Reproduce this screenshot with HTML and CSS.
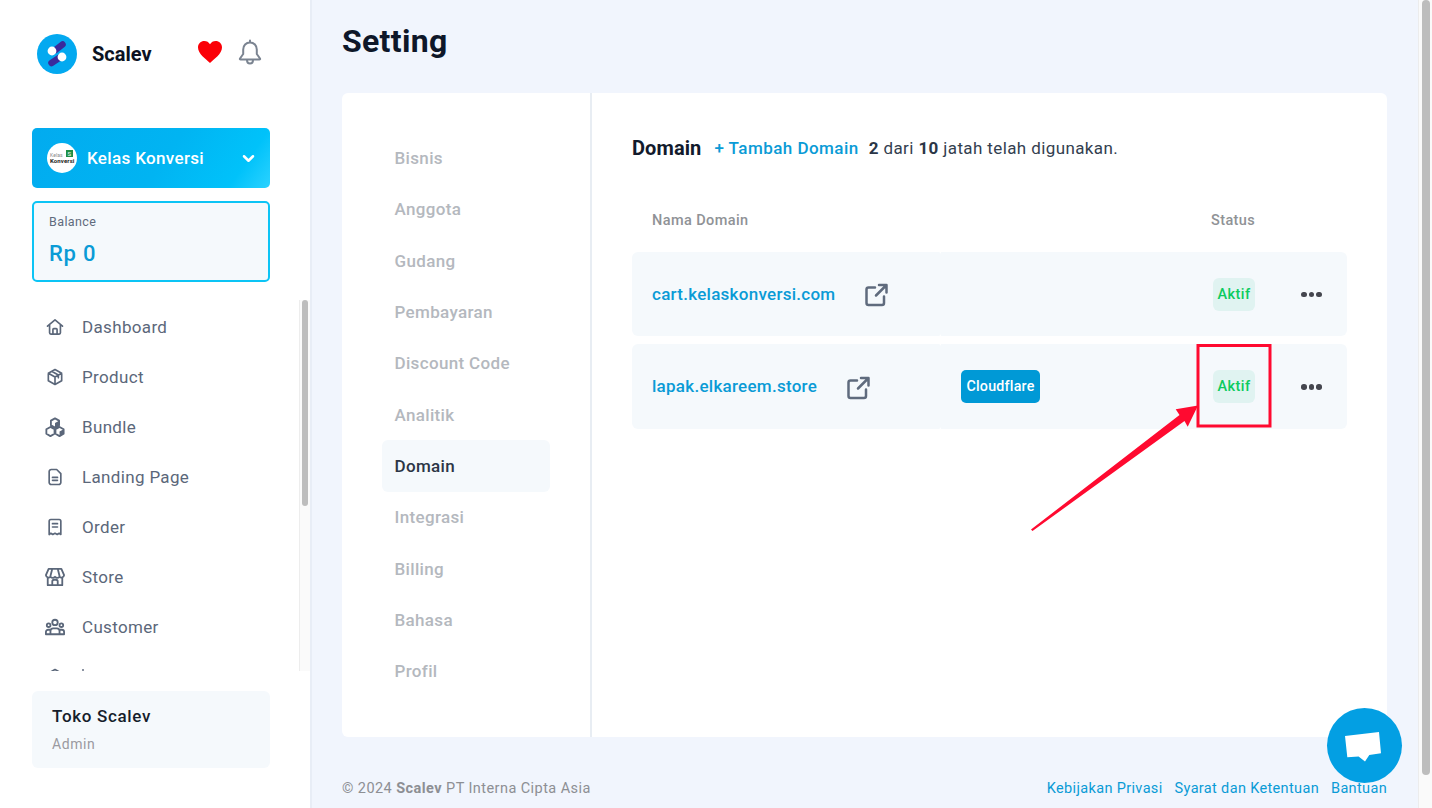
FILE: index.html
```html
<!DOCTYPE html>
<html lang="id">
<head>
<meta charset="utf-8">
<title>Setting - Scalev</title>
<link rel="stylesheet" href="styles.css">
</head>
<body>
<div class="app">
  <aside class="sidebar">
    <div class="brand">
      <svg class="logo" viewBox="0 0 40 40"><circle cx="20" cy="20" r="20" fill="#03a9f0"/><path d="M25.500 10.500 L18.500 16M14.500 29 L22 24" stroke="#3a2a9c" stroke-width="6.500" stroke-linecap="round"/><circle cx="15" cy="17" r="4.400" fill="#fff"/><circle cx="25" cy="23" r="4.400" fill="#fff"/></svg>
      <span class="brand-name">Scalev</span>
      <svg class="heart" viewBox="0 0 24 22"><path d="M12 22 C8 18 0 13 0 6.500 C0 2.500 3 0 6.300 0 C8.800 0 10.800 1.200 12 3.300 C13.200 1.200 15.200 0 17.700 0 C21 0 24 2.500 24 6.500 C24 13 16 18 12 22Z" fill="#fb0007"/></svg>
      <svg class="bell" viewBox="0 0 24 26" fill="none" stroke="#7b8491" stroke-width="2" stroke-linecap="round" stroke-linejoin="round"><path d="M12 1.500v2M12 3.500c-4 0-6.800 3-6.800 7v4.500L2 19.500c-.3.500 0 1 .6 1h18.800c.6 0 .9-.5.6-1L18.800 15v-4.500c0-4-2.800-7-6.800-7Z"/><path d="M9 21c0 2 1.300 3.500 3 3.500s3-1.500 3-3.500"/></svg>
    </div>
    <button class="biz">
      <span class="biz-logo"><span class="biz-mark">S</span><span class="biz-l1">Kelas</span><span class="biz-l2">Konversi</span></span>
      <span class="biz-name">Kelas Konversi</span>
      <svg class="chev" viewBox="0 0 14 10" fill="none" stroke="#fff" stroke-width="2.800" stroke-linecap="round" stroke-linejoin="round"><path d="M2 2.500 7 7.500 12 2.500"/></svg>
    </button>
    <div class="balance">
      <div class="balance-label">Balance</div>
      <div class="balance-value">Rp 0</div>
    </div>
    <div class="nav-wrap">
      <nav class="nav">
        <a class="nav-item"><svg class="ni" viewBox="0 0 24 24"><path d="M3 11 12 3.500 21 11M5.500 9.500V19a1.500 1.500 0 0 0 1.500 1.500h10a1.500 1.500 0 0 0 1.500-1.500V9.500M9.500 20.500V15a1 1 0 0 1 1-1h3a1 1 0 0 1 1 1v5.500"/></svg>Dashboard</a>
        <a class="nav-item"><svg class="ni" viewBox="0 0 24 24"><path d="M12 3 20 7.500v9L12 21 4 16.500v-9ZM4 7.500 12 12l8-4.500M12 12v9M8 5.200l8 4.500V13"/></svg>Product</a>
        <a class="nav-item"><svg class="ni" viewBox="1 1 22 22"><path d="M12 2.500 16.500 5v5L12 12.500 7.500 10V5ZM7 12 11.500 14.500v5L7 22 2.500 19.500v-5ZM17 12 21.500 14.500v5L17 22 12.500 19.500v-5Z"/><path class="fill" d="M17 17 21.500 14.500v5L17 22ZM12 7.500 16.500 5v5L12 12.500Z"/></svg>Bundle</a>
        <a class="nav-item"><svg class="ni" viewBox="0 0 24 24"><path d="M14 3H7.500A2.500 2.500 0 0 0 5 5.500v13A2.500 2.500 0 0 0 7.500 21h9a2.500 2.500 0 0 0 2.500-2.500V8ZM9 12.500h6M9 16h6"/></svg>Landing Page</a>
        <a class="nav-item"><svg class="ni" viewBox="0 0 24 24"><path d="M5 21V5a2 2 0 0 1 2-2h10a2 2 0 0 1 2 2v16l-2-1.500-2.300 1.500-2.700-1.500L9.300 21 7 19.500ZM9 8h6M9 12h6"/></svg>Order</a>
        <a class="nav-item"><svg class="ni" viewBox="1 1 22 22"><path d="M5 3h14l3 7a3 3 0 0 1-5 1.800 3.600 3.600 0 0 1-5 0 3.600 3.600 0 0 1-5 0A3 3 0 0 1 2 10ZM4 12.500V21h16v-8.500M9 21v-4a2 2 0 0 1 2-2h2a2 2 0 0 1 2 2v4M9 3 7 11M15 3l2 8"/></svg>Store</a>
        <a class="nav-item"><svg class="ni" viewBox="1 1 22 22"><circle cx="12" cy="7" r="3"/><circle cx="5" cy="10" r="2"/><circle cx="19" cy="10" r="2"/><path d="M7 20v-3.500a3 3 0 0 1 3-3h4a3 3 0 0 1 3 3V20ZM2 20v-2.500A2.500 2.500 0 0 1 4.500 15H7M22 20v-2.500a2.500 2.500 0 0 0-2.500-2.500H17M2 20h20"/></svg>Customer</a>
        <div class="nav-peek"><svg class="ni" viewBox="0 0 24 24"><path d="M12 3 20 7.500v9L12 21 4 16.500v-9Z"/></svg><span class="peek-tick"></span></div>
      </nav>
      <div class="inner-scroll"><div class="inner-thumb"></div></div>
    </div>
    <div class="user">
      <div class="user-name">Toko Scalev</div>
      <div class="user-role">Admin</div>
    </div>
  </aside>

  <main class="main">
    <h1 class="title">Setting</h1>
    <section class="card">
      <ul class="menu">
        <li>Bisnis</li><li>Anggota</li><li>Gudang</li><li>Pembayaran</li><li>Discount Code</li><li>Analitik</li>
        <li class="active">Domain</li>
        <li>Integrasi</li><li>Billing</li><li>Bahasa</li><li>Profil</li>
      </ul>
      <div class="content">
        <div class="head">
          <strong class="head-title">Domain</strong>
          <a class="head-add">+ Tambah Domain</a>
          <span class="head-note"><b>2</b> dari <b>10</b> jatah telah digunakan.</span>
        </div>
        <table class="table">
          <thead>
            <tr><th class="c1">Nama Domain</th><th class="c2"></th><th class="c3">Status</th><th class="c4"></th></tr>
          </thead>
          <tbody>
            <tr>
              <td><div class="dom"><a class="dom-link">cart.kelaskonversi.com</a><svg class="ext" viewBox="0 0 24 24"><path d="M11 4.500H4.500a2 2 0 0 0-2 2V20a2 2 0 0 0 2 2H18a2 2 0 0 0 2-2v-6.500M12 12.500 22 2.500M15 2h7.500v7.500"/></svg></div></td>
              <td></td>
              <td><span class="aktif">Aktif</span></td>
              <td><span class="dots"><i></i><i></i><i></i></span></td>
            </tr>
            <tr>
              <td><div class="dom"><a class="dom-link">lapak.elkareem.store</a><svg class="ext" viewBox="0 0 24 24"><path d="M11 4.500H4.500a2 2 0 0 0-2 2V20a2 2 0 0 0 2 2H18a2 2 0 0 0 2-2v-6.500M12 12.500 22 2.500M15 2h7.500v7.500"/></svg></div></td>
              <td><span class="cf">Cloudflare</span></td>
              <td><span class="aktif">Aktif</span></td>
              <td><span class="dots"><i></i><i></i><i></i></span></td>
            </tr>
          </tbody>
        </table>
      </div>
    </section>
    <footer class="foot">
      <span class="copy">© 2024 <b>Scalev</b> PT Interna Cipta Asia</span>
      <span class="links"><a>Kebijakan Privasi</a><a>Syarat dan Ketentuan</a><a>Bantuan</a></span>
    </footer>
  </main>
  <div class="page-scroll"><div class="page-thumb"></div></div>
</div>

<svg class="annot" viewBox="0 0 1432 808" width="1432" height="808">
  <rect x="1198" y="345.500" width="72" height="80.500" fill="none" stroke="#ff0a30" stroke-width="3"/>
  <path d="M1031 529.500 1032.500 531 1184.500 421 1187.700 426.700 1198 405.500 1175.700 409.300 1179.500 415Z" fill="#ff0a30"/>
</svg>
<button class="chat"><svg viewBox="0 0 36 30" class="chat-ic"><path d="M0 4 34 0 36 21.300 24.300 23 20 29.600 13.600 24.600 2.300 25.300Z" fill="#fff"/></svg></button>
</body>
</html>
```
FILE: styles.css
```css
* { box-sizing: border-box; }
html, body { margin: 0; height: 100%; overflow: hidden; }
body { font-family: Roboto, "Liberation Sans", sans-serif; letter-spacing: .025em; color: #1a2233; background: #f1f5fd; }
a { color: inherit; text-decoration: none; }
.app { display: flex; height: 808px; }

.sidebar { width: 312px; flex: none; background: #fff; border-right: 2px solid #e8edf6; display: flex; flex-direction: column; }
.brand { height: 128px; flex: none; display: flex; align-items: center; padding: 0 48px 20px 37px; }
.logo { width: 40px; height: 40px; flex: none; }
.brand-name { margin-left: 15px; font-size: 20px; font-weight: 700; letter-spacing: 0; color: #0c1222; flex: 1; }
.heart { width: 24px; height: 22px; margin: 0 16px 4px 0; }
.bell { width: 24px; height: 26px; margin-bottom: 4px; }

.biz { margin: 0 40px 0 32px; height: 60px; flex: none; border: 0; border-radius: 5px; background: linear-gradient(125deg, #02abef 0%, #01b4f2 55%, #00c2fa 85%, #2bd2ff 100%); display: flex; align-items: center; padding: 0 15px 0 15px; color: #fff; font: inherit; letter-spacing: .025em; }
.biz-logo { width: 30px; height: 30px; border-radius: 50%; background: #fff; flex: none; position: relative; overflow: hidden; display: block; }
.biz-mark { position: absolute; left: 19px; top: 7px; width: 7px; height: 7px; background: #1f8f45; color: #fff; font-size: 6px; line-height: 7px; text-align: center; }
.biz-l1 { position: absolute; left: 3px; top: 10px; font-size: 5px; line-height: 5px; letter-spacing: .02em; color: #888; }
.biz-l2 { position: absolute; left: 3px; top: 15px; font-size: 6px; line-height: 6px; font-weight: 700; letter-spacing: .02em; color: #222; }
.biz-name { margin-left: 10px; font-size: 17px; font-weight: 500; letter-spacing: .02em; flex: 1; text-align: left; }
.chev { width: 13px; height: 9px; }

.balance { margin: 13px 40px 0 32px; height: 81px; flex: none; border: 2px solid #0cc4f5; border-radius: 5px; background: #f5f9fc; padding: 11px 15px; }
.balance-label { font-size: 12.500px; line-height: 16px; color: #5f6b7d; }
.balance-value { margin-top: 9px; font-size: 22px; line-height: 30px; font-weight: 500; letter-spacing: .035em; color: #0a9bd6; }

.nav-wrap { flex: none; height: 371px; margin-top: 18px; position: relative; overflow: hidden; }
.nav { padding: 2px 0 0 45px; display: flex; flex-direction: column; }
.nav-item { height: 50px; flex: none; display: flex; align-items: center; font-size: 17px; letter-spacing: .02em; color: #5b677a; }
.nav-peek { height: 50px; flex: none; display: flex; align-items: center; }
.peek-tick { width: 2px; height: 12px; background: #5b677a; opacity: .7; margin-bottom: 4px; }
.ni { width: 20px; height: 20px; margin-right: 17px; fill: none; stroke: #5b677a; stroke-width: 2; stroke-linejoin: round; stroke-linecap: round; flex: none; }
.ni .fill { fill: #5b677a; stroke: none; }
.inner-scroll { position: absolute; top: 0; right: 0; bottom: 0; width: 11px; background: #fafafa; border-left: 1px solid #ededed; }
.inner-thumb { position: absolute; left: 2px; width: 6px; top: 0; height: 206px; background: #bdbdbd; border-radius: 3px; }

.user { margin: 20px 40px 0 32px; height: 77px; flex: none; border-radius: 6px; background: #f5f9fc; padding: 15px 20px; }
.user-name { font-size: 17px; line-height: 20px; font-weight: 500; letter-spacing: .04em; color: #161d2b; }
.user-role { margin-top: 8px; font-size: 14px; line-height: 20px; letter-spacing: .04em; color: #9a9aa0; }

.main { flex: 1; min-width: 0; padding: 0 31px 0 30px; display: flex; flex-direction: column; }
.title { margin: 0; height: 93px; padding-top: 21px; font-size: 32px; line-height: 40px; font-weight: 700; letter-spacing: .01em; color: #0e1729; }
.card { height: 644px; flex: none; background: #fff; border-radius: 6px; display: flex; }
.menu { list-style: none; margin: 0; width: 250px; flex: none; border-right: 2px solid #e8edf3; padding: 39.500px 40px 0 40px; }
.menu li { height: 51.300px; display: flex; align-items: center; padding-left: 12.500px; font-size: 17px; font-weight: 500; letter-spacing: .02em; color: #b4b8be; border-radius: 6px; }
.menu .active { background: #f5f9fc; color: #2c3646; }

.content { flex: 1; min-width: 0; padding: 0 40px; }
.head { height: 102.500px; padding-top: 40px; display: flex; align-items: baseline; white-space: nowrap; }
.head-title { font-size: 20px; line-height: 28px; font-weight: 700; letter-spacing: .005em; color: #121a2c; position: relative; top: 1px; }
.head-add { margin-left: 13px; font-size: 17px; font-weight: 500; letter-spacing: .027em; color: #0a9bd6; }
.head-note { margin-left: 10px; font-size: 17px; letter-spacing: .023em; color: #33404f; }
.head-note b { font-weight: 700; color: #2b3647; }

.table { width: 715px; border-collapse: separate; border-spacing: 0 8px; table-layout: fixed; }
.c1 { width: 309px; } .c2 { width: 250px; } .c3 { width: 90px; } .c4 { width: 66px; }
th { height: 40.500px; padding: 0 0 6px 20px; text-align: left; font-size: 14.500px; font-weight: 500; color: #8f9296; }
td { height: 84px; padding: 0 0 0 20px; background: #f5f9fc; }
tr:last-child td { height: 85px; }
td:first-child { border-radius: 6px 3px 3px 6px; }
td:last-child { border-radius: 0 6px 6px 0; }
.dom { display: flex; align-items: center; }
.dom-link { font-size: 17px; font-weight: 500; letter-spacing: .016em; color: #0a9bd6; position: relative; top: -.5px; }
.ext { width: 24px; height: 24px; margin: 2px 0 0 29px; fill: none; stroke: #5f6b7d; stroke-width: 2.500; stroke-linecap: round; stroke-linejoin: round; }
.aktif { display: inline-block; margin-left: 2px; width: 42px; height: 33px; line-height: 33px; text-align: center; border-radius: 6px; background: #e0f3f1; color: #0ccb5e; font-size: 14.500px; font-weight: 500; }
.cf { display: inline-block; height: 33px; line-height: 32px; padding: 0 5.500px; border-radius: 5px; background: #0099d6; color: #fff; font-size: 14.250px; font-weight: 500; letter-spacing: .015em; }
.dots { display: flex; gap: 2px; position: relative; top: .5px; }
.dots i { width: 5.500px; height: 5.500px; border-radius: 50%; background: #44464e; }

.foot { margin-top: 41.500px; display: flex; justify-content: space-between; font-size: 14.500px; line-height: 20px; color: #8d8f94; }
.copy { letter-spacing: .03em; }
.copy b { font-weight: 700; }
.links { display: flex; gap: 12px; color: #0a9bd6; letter-spacing: .024em; }

.page-scroll { width: 14px; flex: none; background: #fafafa; border-left: 1px solid #ececec; position: relative; }
.page-thumb { position: absolute; left: 3px; width: 8px; top: 0; height: 775px; background: #bdbdbd; border-radius: 4px; }

.annot { position: fixed; left: 0; top: 0; pointer-events: none; }
.chat { position: fixed; left: 1327px; top: 708px; width: 75px; height: 75px; border: 0; padding: 0; border-radius: 50%; background: #039fe3; display: flex; align-items: center; justify-content: center; }
.chat-ic { width: 36px; height: 30px; margin: 3px 3px 0 0; }
```
